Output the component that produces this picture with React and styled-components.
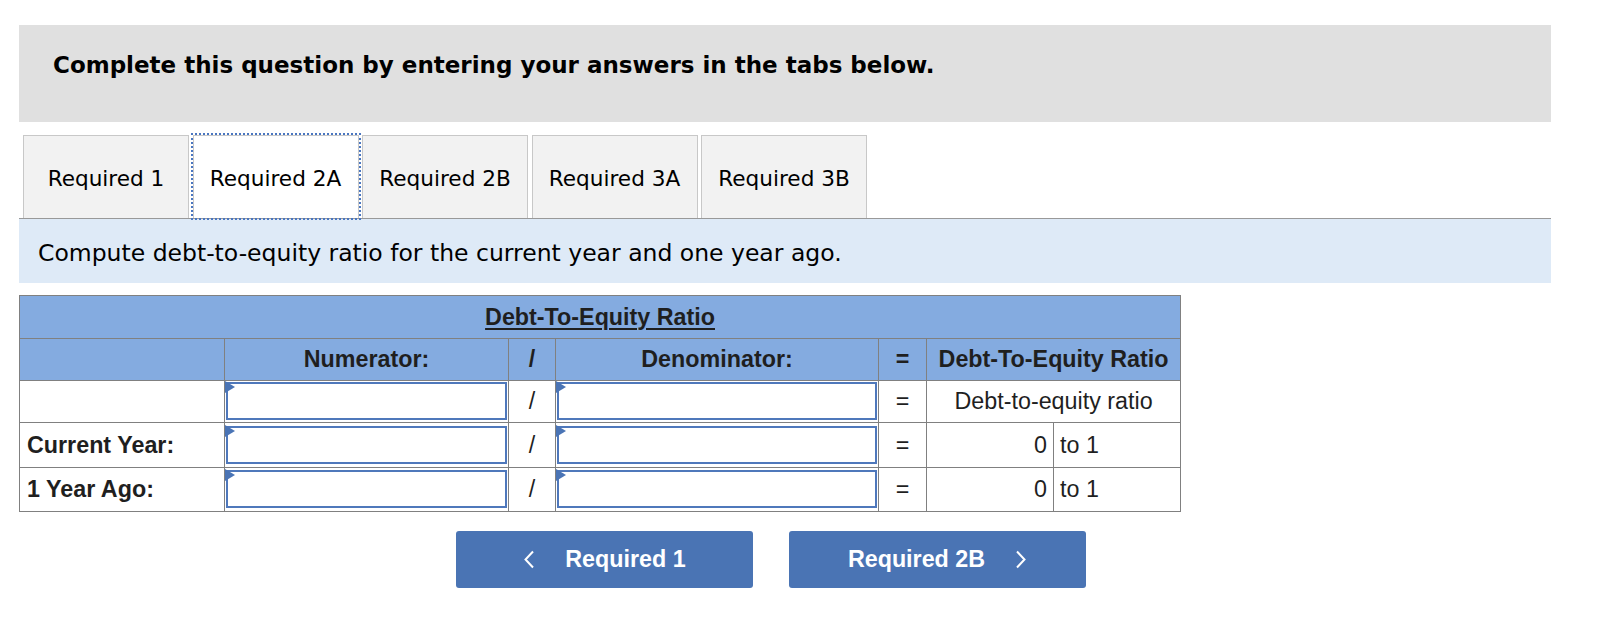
import React from "react";
import styled, { createGlobalStyle } from "styled-components";

const GlobalStyle = createGlobalStyle`
  html, body { margin: 0; padding: 0; background: #ffffff; }
  * { box-sizing: border-box; }
`;

const Page = styled.div`
  padding: 25px 0 0 19px;
  width: 1602px;
`;

const Banner = styled.div`
  width: 1532px;
  height: 97px;
  background: #e0e0e0;
  padding: 27px 0 0 34px;
  font-family: "DejaVu Sans", Verdana, sans-serif;
  font-weight: bold;
  font-size: 23px;
  line-height: 27px;
  color: #000;
`;

const TabRow = styled.div`
  display: flex;
  gap: 3.5px;
  margin-top: 13px;
  padding-left: 4px;
  width: 1532px;
`;

const Tab = styled.button`
  width: 166px;
  height: 83px;
  padding: 2px 0 0 0;
  margin: 0;
  border: 1px solid #c8c8c8;
  border-bottom: none;
  background: ${(p) => (p.$active ? "#ffffff" : "#f2f2f2")};
  outline: ${(p) => (p.$active ? "2px dotted #4a76c0" : "none")};
  outline-offset: 0;
  font-family: "DejaVu Sans", Verdana, sans-serif;
  font-size: 21.6px;
  color: #000;
  display: flex;
  align-items: center;
  justify-content: center;
  white-space: nowrap;
  position: relative;
  z-index: ${(p) => (p.$active ? 1 : 0)};
`;

const Instruction = styled.div`
  width: 1532px;
  height: 65px;
  border-top: 1px solid #999999;
  background: #deeaf7;
  padding: 4px 0 0 19px;
  display: flex;
  align-items: center;
  font-family: "DejaVu Sans", Verdana, sans-serif;
  font-size: 23.5px;
  color: #000;
`;

const Table = styled.table`
  margin-top: 12px;
  width: 1161px;
  border-collapse: collapse;
  table-layout: fixed;
  font-family: "Liberation Sans", Arial, Helvetica, sans-serif;
  font-size: 23.3px;
  color: #1f1f1f;
`;

const HeadCell = styled.th`
  background: #84abe0;
  border: 1px solid #808080;
  height: ${(p) => p.$h || 42}px;
  padding: 0 2px;
  font-weight: bold;
  text-align: center;
  white-space: nowrap;
  vertical-align: middle;
`;

const Underlined = styled.span`
  text-decoration: underline;
  text-underline-offset: 3px;
  text-decoration-thickness: 2px;
`;

const Cell = styled.td`
  border: 1px solid #808080;
  height: ${(p) => p.$h || 42}px;
  padding: ${(p) => p.$pad || "0"};
  text-align: ${(p) => p.$align || "center"};
  font-weight: ${(p) => (p.$bold ? "bold" : "normal")};
  vertical-align: middle;
  white-space: nowrap;
`;

const InputWrap = styled.div`
  position: relative;
  margin: 1px 1px 2px 1px;
`;

const Input = styled.input`
  display: block;
  width: 100%;
  height: 38px;
  border: 2px solid #4f78bb;
  background: #ffffff;
  font-family: "Liberation Sans", Arial, sans-serif;
  font-size: 20px;
  outline: none;
`;

const Flag = styled.span`
  position: absolute;
  left: -1px;
  top: -1px;
  width: 0;
  height: 0;
  border-top: 6px solid transparent;
  border-bottom: 6px solid transparent;
  border-left: 10px solid #4a74b5;
`;

const ButtonRow = styled.div`
  display: flex;
  gap: 36px;
  margin-top: 19px;
  margin-left: 437px;
`;

const NavButton = styled.button`
  width: 297px;
  height: 57px;
  border: none;
  border-radius: 3px;
  background: #4a74b4;
  color: #ffffff;
  font-family: "Liberation Sans", Arial, Helvetica, sans-serif;
  font-weight: bold;
  font-size: 23.3px;
  display: flex;
  align-items: center;
  justify-content: center;
  gap: 30px;
  padding: 0;
`;

const Chevron = ({ dir }) => (
  <svg width="12" height="19" viewBox="0 0 12 19" aria-hidden="true">
    <path
      d={dir === "left" ? "M10 1.5 L2.5 9.5 L10 17.5" : "M2 1.5 L9.5 9.5 L2 17.5"}
      fill="none"
      stroke="#ffffff"
      strokeWidth="2"
    />
  </svg>
);

const AnswerInput = () => (
  <InputWrap>
    <Input type="text" />
    <Flag />
  </InputWrap>
);

const tabs = ["Required 1", "Required 2A", "Required 2B", "Required 3A", "Required 3B"];

const rows = [
  { label: "Current Year:", h: 45 },
  { label: "1 Year Ago:", h: 44 },
];

export default function App() {
  return (
    <>
      <GlobalStyle />
      <Page>
        <Banner>Complete this question by entering your answers in the tabs below.</Banner>
        <TabRow>
          {tabs.map((t) => (
            <Tab key={t} $active={t === "Required 2A"}>
              {t}
            </Tab>
          ))}
        </TabRow>
        <Instruction>Compute debt-to-equity ratio for the current year and one year ago.</Instruction>
        <Table>
          <colgroup>
            <col style={{ width: 205 }} />
            <col style={{ width: 284 }} />
            <col style={{ width: 47 }} />
            <col style={{ width: 323 }} />
            <col style={{ width: 48 }} />
            <col style={{ width: 127 }} />
            <col style={{ width: 127 }} />
          </colgroup>
          <thead>
            <tr>
              <HeadCell colSpan={7} $h={43}>
                <Underlined>Debt-To-Equity Ratio</Underlined>
              </HeadCell>
            </tr>
            <tr>
              <HeadCell />
              <HeadCell>Numerator:</HeadCell>
              <HeadCell>/</HeadCell>
              <HeadCell>Denominator:</HeadCell>
              <HeadCell>=</HeadCell>
              <HeadCell colSpan={2}>Debt-To-Equity Ratio</HeadCell>
            </tr>
          </thead>
          <tbody>
            <tr>
              <Cell />
              <Cell>
                <AnswerInput />
              </Cell>
              <Cell>/</Cell>
              <Cell>
                <AnswerInput />
              </Cell>
              <Cell>=</Cell>
              <Cell colSpan={2}>Debt-to-equity ratio</Cell>
            </tr>
            {rows.map((r) => (
              <tr key={r.label}>
                <Cell $h={r.h} $bold $align="left" $pad="0 0 0 7px">
                  {r.label}
                </Cell>
                <Cell $h={r.h}>
                  <AnswerInput />
                </Cell>
                <Cell $h={r.h}>/</Cell>
                <Cell $h={r.h}>
                  <AnswerInput />
                </Cell>
                <Cell $h={r.h}>=</Cell>
                <Cell $h={r.h} $align="right" $pad="0 6px 0 0">
                  0
                </Cell>
                <Cell $h={r.h} $align="left" $pad="0 0 0 6px">
                  to 1
                </Cell>
              </tr>
            ))}
          </tbody>
        </Table>
        <ButtonRow>
          <NavButton>
            <Chevron dir="left" />
            Required 1
          </NavButton>
          <NavButton>
            Required 2B
            <Chevron dir="right" />
          </NavButton>
        </ButtonRow>
      </Page>
    </>
  );
}
